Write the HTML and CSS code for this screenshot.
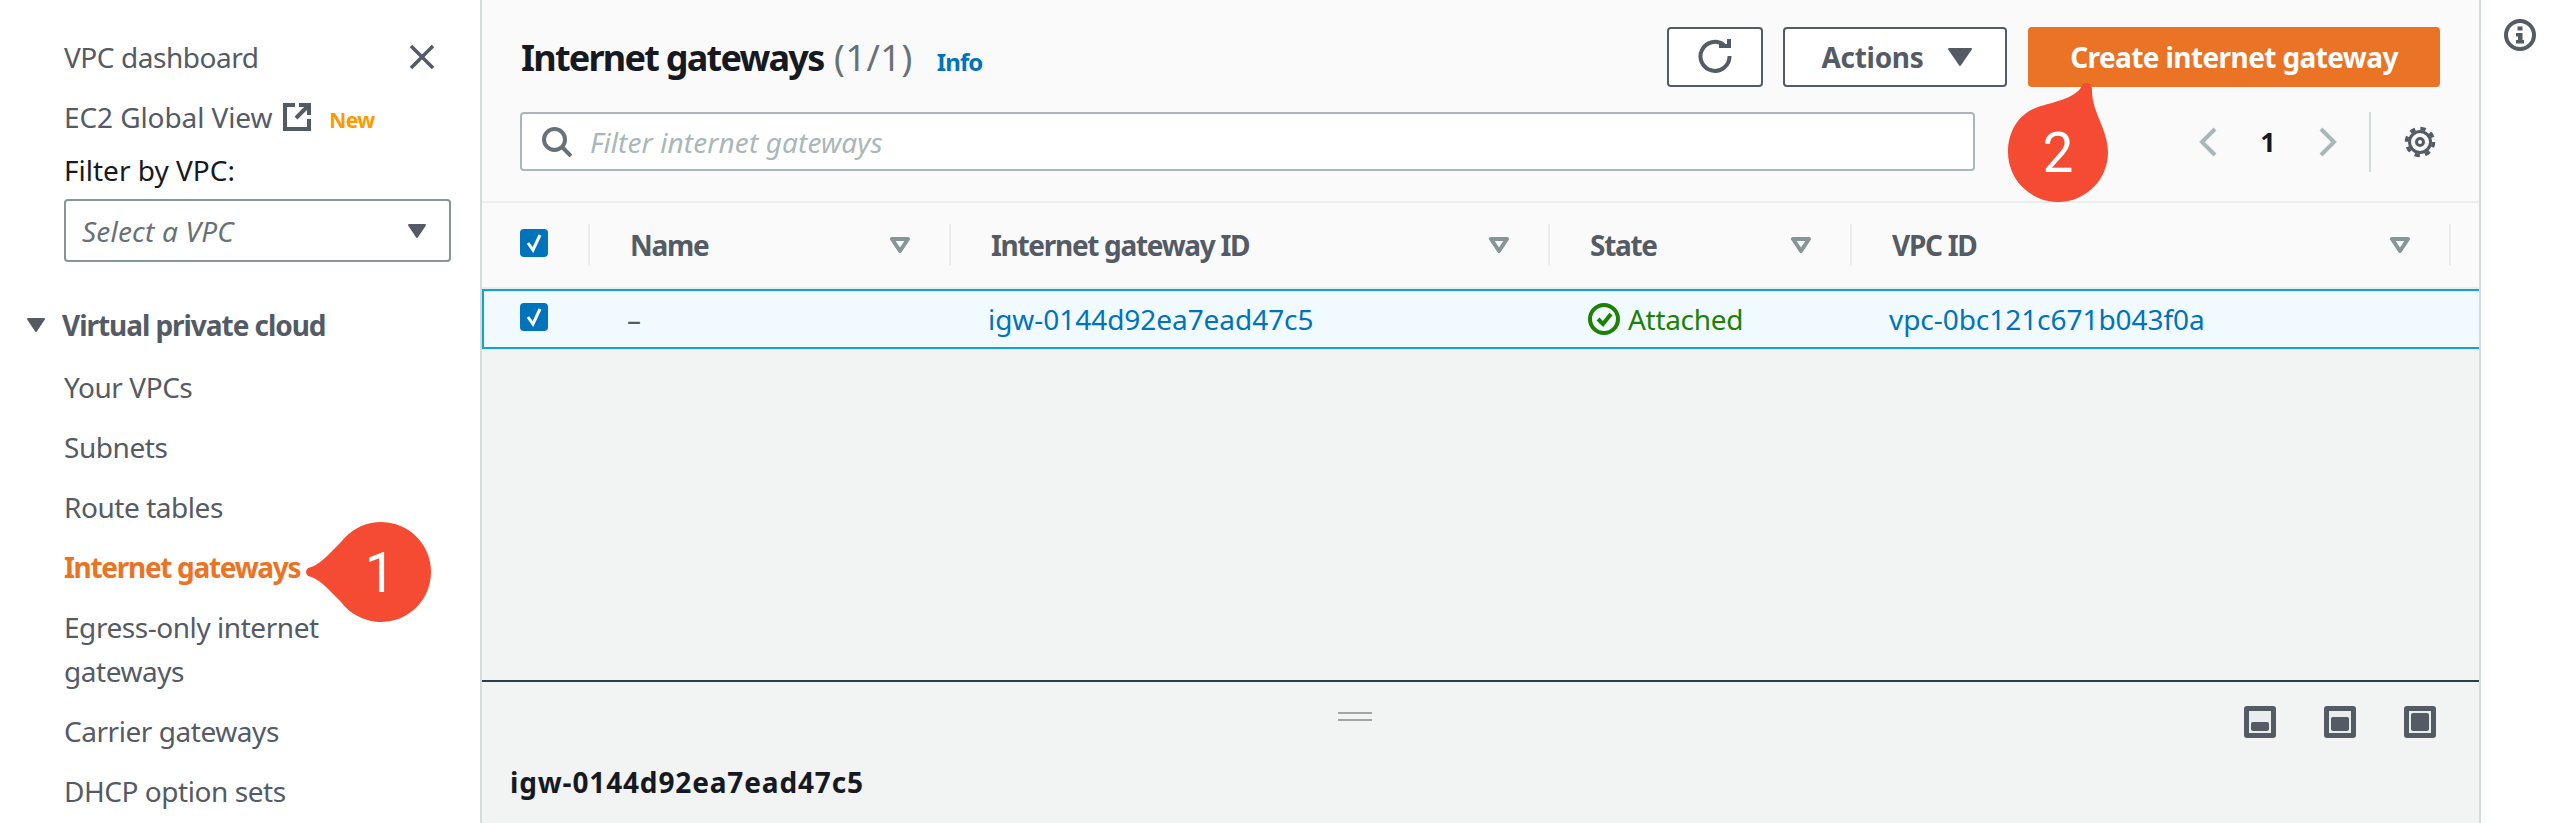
FILE: index.html
```html
<!DOCTYPE html>
<html lang="en">
<head>
<meta charset="utf-8">
<title>Internet gateways</title>
<link rel="stylesheet" href="styles.css">
</head>
<body>
<div class="app">
  <aside class="nav">
    <div class="nav-row nav-top"><a class="nav-link">VPC dashboard</a>
      <svg class="close" viewBox="0 0 28 28"><path d="M3 3l22 22M25 3L3 25"/></svg></div>
    <div class="nav-row nav-ec2"><a class="nav-link">EC2 Global View</a>
      <svg class="ext" viewBox="0 0 28 28"><path d="M12 2H2v24h24V16" /><path d="M13 15L25 3M16 2h10v10" class="ext-arrow"/></svg>
      <span class="new">New</span></div>
    <div class="filter-label">Filter by VPC:</div>
    <div class="select"><span>Select a VPC</span>
      <svg class="caret" viewBox="0 0 20 16"><path d="M2 2h16l-8 12z"/></svg></div>
    <div class="section"><svg class="caret" viewBox="0 0 20 16"><path d="M2 2h16l-8 12z"/></svg><span>Virtual private cloud</span></div>
    <ul class="menu">
      <li>Your VPCs</li>
      <li>Subnets</li>
      <li>Route tables</li>
      <li class="active">Internet gateways</li>
      <li>Egress-only internet gateways</li>
      <li>Carrier gateways</li>
      <li>DHCP option sets</li>
    </ul>
  </aside>

  <main class="main">
    <section class="top">
      <div class="head">
        <h1 class="title">Internet gateways <span class="count">(1/1)</span><a class="info">Info</a></h1>
        <div class="actions">
          <button class="btn btn-icon"><svg viewBox="0 0 34 34"><path d="M26 6A14.500 14.500 0 1 0 31.500 17"/><path class="fill" d="M21 9h12V0h-4v5h-8z"/></svg></button>
          <button class="btn btn-actions">Actions<svg class="caret" viewBox="0 0 26 20"><path d="M2 2h22L13 18z"/></svg></button>
          <button class="btn btn-primary">Create internet gateway</button>
        </div>
      </div>
      <div class="tools">
        <div class="search">
          <svg viewBox="0 0 30 30"><circle cx="12.500" cy="12.500" r="10.500"/><path d="M20 20l9 9"/></svg>
          <span>Filter internet gateways</span>
        </div>
        <div class="pager">
          <svg class="chev" viewBox="0 0 18 30"><path d="M16 2L3 15l13 13"/></svg>
          <span class="page">1</span>
          <svg class="chev" viewBox="0 0 18 30"><path d="M2 2l13 13L2 28"/></svg>
          <span class="divider"></span>
          <svg class="gear" viewBox="0 0 32 32"><circle cx="16" cy="16" r="10.500"/><circle class="teeth" cx="16" cy="16" r="13.500"/><circle cx="16" cy="16" r="3.500"/></svg>
        </div>
      </div>
    </section>

    <div class="grid thead">
      <div class="cell cell-check"><span class="check"><svg viewBox="0 0 28 28"><path d="M8 14l5 7 7-15"/></svg></span></div>
      <div class="cell th">Name<svg class="sort" viewBox="0 0 20 16"><path d="M2 2h16l-8 12z"/></svg></div>
      <div class="cell th">Internet gateway ID<svg class="sort" viewBox="0 0 20 16"><path d="M2 2h16l-8 12z"/></svg></div>
      <div class="cell th">State<svg class="sort" viewBox="0 0 20 16"><path d="M2 2h16l-8 12z"/></svg></div>
      <div class="cell th">VPC ID<svg class="sort" viewBox="0 0 20 16"><path d="M2 2h16l-8 12z"/></svg></div>
      <div class="cell"></div>
    </div>
    <div class="grid tr">
      <div class="cell cell-check"><span class="check"><svg viewBox="0 0 28 28"><path d="M8 14l5 7 7-15"/></svg></span></div>
      <div class="cell td">–</div>
      <div class="cell td link">igw-0144d92ea7ead47c5</div>
      <div class="cell td status"><svg viewBox="0 0 32 32"><circle cx="16" cy="16" r="14"/><path d="M10 16l5 5 8-10"/></svg>Attached</div>
      <div class="cell td link">vpc-0bc121c671b043f0a</div>
      <div class="cell"></div>
    </div>
    <div class="empty"></div>

    <section class="split">
      <div class="split-bar">
        <span class="handle"></span>
        <div class="split-icons">
          <span class="pos"><i class="pos-low"></i></span>
          <span class="pos"><i class="pos-mid"></i></span>
          <span class="pos"><i class="pos-full"></i></span>
        </div>
      </div>
      <h2 class="split-title">igw-0144d92ea7ead47c5</h2>
    </section>
  </main>

  <aside class="rail">
    <svg viewBox="0 0 32 32"><circle cx="16" cy="16" r="14"/><path class="fill" d="M13.500 7.500h5v4h-5zM12 14h6.500v7H20v3.500h-8V21h2v-3.500h-2z"/></svg>
  </aside>
</div>

<div class="pin pin-one">
  <svg viewBox="0 0 126 100"><path d="M3 46C14 44 24 32 36 20A50 50 0 1 1 36 80C24 68 14 56 3 54Q-1 50 3 46Z"/></svg>
  <span>1</span>
</div>
<div class="pin pin-two">
  <svg viewBox="0 0 101 121"><path d="M74 4C67 17 45 20 30 25C12 31 0 48 0 70A50 50 0 0 0 100 70C100 48 84 30 84 9Q84 0 78 1Q75 1 74 4Z"/></svg>
  <span>2</span>
</div>
</body>
</html>
```
FILE: styles.css
```css
* { box-sizing: border-box; }
html, body { margin: 0; padding: 0; height: 100%; overflow: hidden; }
body { font-family: "Noto Sans", "Open Sans", sans-serif; font-size: 28px; line-height: 44px; color: #16191f; background: #fff; position: relative; }
h1, h2, ul { margin: 0; padding: 0; font-size: inherit; }
ul { list-style: none; }
button { font: inherit; }
.caret path { fill: #545b64; stroke: #545b64; stroke-width: 2; stroke-linejoin: round; }

.app { display: flex; height: 823px; overflow: hidden; }

/* side navigation */
.nav { width: 482px; flex: none; padding: 35px 29px 0 64px; border-right: 2px solid #d5dbdb; background: #fff; color: #545b64; overflow: hidden; }
.nav-row { display: flex; align-items: center; height: 44px; }
.nav-top { justify-content: space-between; padding-right: 15px; }
.nav-top .nav-link { letter-spacing: -0.45px; }
.close { width: 28px; height: 28px; }
.close path { stroke: #545b64; stroke-width: 3.500; fill: none; }
.nav-ec2 { margin-top: 16px; }
.nav-ec2 .nav-link { letter-spacing: -0.1px; }
.ext { width: 28px; height: 28px; margin-left: 11px; }
.ext path { fill: none; stroke: #545b64; stroke-width: 4; }
.new { margin-left: 18px; font-size: 21px; font-weight: 700; color: #ff9900; position: relative; top: 3px; letter-spacing: -0.6px; }
.filter-label { margin-top: 9px; color: #16191f; }
.select { margin-top: 7px; height: 63px; display: flex; align-items: center; justify-content: space-between; padding: 0 22px 0 16px; border: 2px solid #879596; border-radius: 4px; font-style: italic; color: #687078; letter-spacing: 0.2px; }
.select .caret { width: 20px; height: 16px; }
.section { display: flex; align-items: center; gap: 16px; margin: 41px 0 18px -38px; font-weight: 700; letter-spacing: -1.050px; }
.section .caret { width: 20px; height: 16px; flex: none; }
.menu li { margin-bottom: 16px; width: 330px; letter-spacing: -0.45px; }
.menu .active { color: #eb7326; font-weight: 700; letter-spacing: -1.3px; }

/* main column */
.main { flex: 1; min-width: 0; display: flex; flex-direction: column; background: #f2f3f3; }
.top { background: #fafafa; padding: 27px 39px 30px 38px; border-bottom: 2px solid #eaeded; height: 203px; }
.head { display: flex; justify-content: space-between; height: 60px; }
.title { font-size: 36px; line-height: 62px; font-weight: 700; color: #16191f; letter-spacing: -1.750px; padding-left: 1px; }
.count { font-weight: 400; color: #687078; letter-spacing: 0.5px; margin-left: 3px; }
.info { margin-left: 24px; font-size: 24px; color: #0073bb; letter-spacing: -0.9px; }
.actions { display: flex; gap: 20px; }
.btn { height: 60px; border: 2px solid #545b64; border-radius: 4px; background: #fff; color: #545b64; font-weight: 700; display: flex; align-items: center; justify-content: center; padding: 0; }
.btn-icon { width: 96px; }
.btn-icon svg { width: 34px; height: 34px; margin-bottom: 2px; }
.btn-icon path { fill: none; stroke: #545b64; stroke-width: 4; }
.btn-icon .fill { fill: #545b64; stroke: none; }
.btn-actions { width: 224px; gap: 23px; padding-left: 4px; letter-spacing: -0.3px; }
.btn-actions .caret { width: 26px; height: 20px; }
.btn-primary { width: 412px; margin-left: 1px; background: #eb7326; border-color: #eb7326; color: #fff; letter-spacing: -0.600px; }

.tools { display: flex; margin-top: 25px; }
.search { flex: 1; height: 59px; display: flex; align-items: center; gap: 18px; padding-left: 20px; background: #fff; border: 2px solid #aab7b8; border-radius: 4px; font-style: italic; color: #aab7b8; letter-spacing: 0.1px; }
.search svg { width: 30px; height: 30px; }
.search circle, .search path { fill: none; stroke: #687078; stroke-width: 4; }
.pager { width: 465px; flex: none; display: flex; align-items: center; padding-left: 224px; }
.chev { width: 18px; height: 30px; }
.chev path { fill: none; stroke: #aab7b8; stroke-width: 4; }
.page { width: 102px; text-align: center; font-weight: 700; color: #16191f; font-size: 27px; }
.divider { width: 2px; height: 60px; background: #d5dbdb; margin-left: 32px; }
.gear { width: 32px; height: 32px; margin-left: 33px; }
.gear circle { fill: none; stroke: #545b64; stroke-width: 3; }
.gear .teeth { stroke-width: 3.500; stroke-dasharray: 5.300 5.300; }

/* table */
.grid { display: grid; grid-template-columns: 108px 361px 599px 302px 599px 1fr; }
.thead { height: 86px; background: #fafafa; border-bottom: 2px solid #eaeded; }
.thead .cell { position: relative; }
.thead .cell:not(:last-child)::after { content: ""; position: absolute; right: 0; top: 21px; width: 2px; height: 42px; background: #eaeded; }
.cell { display: flex; align-items: center; min-width: 0; }
.cell-check { padding-left: 38px; }
.check { width: 28px; height: 28px; background: #0073bb; border-radius: 4px; margin-bottom: 4px; display: block; }
.check svg { display: block; width: 28px; height: 28px; }
.check path { fill: none; stroke: #fff; stroke-width: 3; }
.th { justify-content: space-between; padding: 0 41px 0 40px; font-weight: 700; color: #545b64; letter-spacing: -1.300px; }
.sort { width: 20px; height: 16px; flex: none; }
.sort path { fill: none; stroke: #879596; stroke-width: 4; stroke-linejoin: round; }
.tr { height: 60px; background: #f1faff; border-top: 2px solid #13a2c9; border-bottom: 2px solid #13a2c9; box-shadow: inset 2px 0 0 #13a2c9; }
.td { padding-left: 37px; color: #545b64; white-space: nowrap; }
.link { color: #0073bb; letter-spacing: -0.05px; }
.td.status { padding-left: 38px; color: #1d8102; letter-spacing: -0.3px; }
.status svg { width: 32px; height: 32px; margin-right: 8px; flex: none; }
.status circle, .status path { fill: none; stroke: #1d8102; stroke-width: 4; }
.empty { flex: 1; }

/* split panel */
.split { height: 143px; border-top: 2px solid #2b3c4a; background: #f2f3f3; }
.split-bar { display: flex; align-items: flex-start; padding: 24px 43px 0 856px; height: 78px; }
.handle { width: 34px; height: 9px; margin-top: 6px; border-top: 2px solid #a4a4a4; border-bottom: 2px solid #a4a4a4; }
.split-icons { margin-left: auto; display: flex; gap: 48px; }
.pos { width: 32px; height: 32px; border: 5px solid #545b64; border-radius: 3px; background: #eaeded; display: flex; align-items: flex-end; padding: 2px; }
.pos i { display: block; width: 100%; background: #545b64; border-radius: 2px; }
.pos-low { height: 9px; }
.pos-mid { height: 14px; }
.pos-full { height: 18px; }
.split-title { margin: 0 0 0 28px; line-height: 44px; font-weight: 700; letter-spacing: 0.85px; color: #16191f; }

/* right rail */
.rail { width: 81px; flex: none; background: #fff; border-left: 2px solid #d5dbdb; padding: 19px 0 0 23px; }
.rail svg { width: 32px; height: 32px; display: block; }
.rail circle { fill: none; stroke: #545b64; stroke-width: 4; }
.rail .fill { fill: #545b64; }

/* callout pins lying over the page */
.pin { position: absolute; color: #fff; font-family: Roboto, sans-serif; font-size: 55px; line-height: 60px; text-align: center; }
.pin svg { display: block; width: 100%; height: 100%; }
.pin path { fill: #f44b32; }
.pin span { position: absolute; }
.pin-one { left: 305px; top: 522px; width: 126px; height: 100px; }
.pin-one span { left: 50px; width: 50px; top: 21px; }
.pin-two { left: 2008px; top: 82px; width: 101px; height: 121px; }
.pin-two span { left: 25px; width: 50px; top: 41px; }
```
